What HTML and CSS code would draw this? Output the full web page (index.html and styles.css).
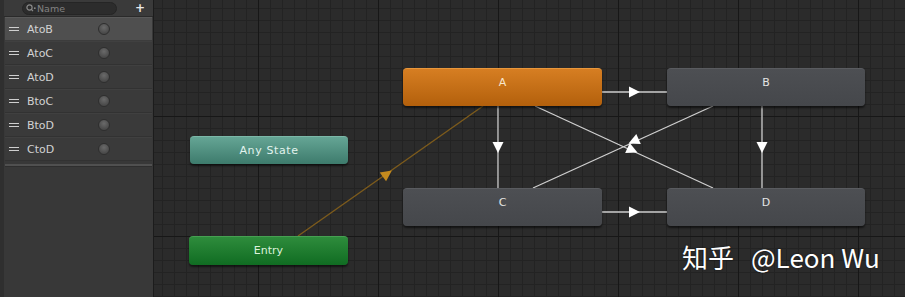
FILE: index.html
```html
<!DOCTYPE html>
<html>
<head>
<meta charset="utf-8">
<link rel="stylesheet" href="styles.css">
</head>
<body>
<div class="app">
  <aside class="panel">
    <div class="toolbar">
      <div class="search">
        <svg class="mag" width="10" height="9" viewBox="0 0 10 9"><circle cx="3.5" cy="3.5" r="2.6" fill="none" stroke="#8a8a8a" stroke-width="1.2"/><line x1="5.4" y1="5.4" x2="7" y2="7.2" stroke="#8a8a8a" stroke-width="1.2"/><circle cx="8.8" cy="4.2" r="0.9" fill="#8a8a8a"/></svg>
        <span class="placeholder">Name</span>
      </div>
      <span class="plus">+</span>
    </div>
    <ul class="list">
      <li class="row selected"><span class="grip"></span><span class="name">AtoB</span><span class="dot"></span></li>
      <li class="row"><span class="grip"></span><span class="name">AtoC</span><span class="dot"></span></li>
      <li class="row"><span class="grip"></span><span class="name">AtoD</span><span class="dot"></span></li>
      <li class="row"><span class="grip"></span><span class="name">BtoC</span><span class="dot"></span></li>
      <li class="row"><span class="grip"></span><span class="name">BtoD</span><span class="dot"></span></li>
      <li class="row"><span class="grip"></span><span class="name">CtoD</span><span class="dot"></span></li>
    </ul>
    <div class="sep"></div>
  </aside>
  <main class="canvas">
    <svg class="links" width="751" height="297" viewBox="154 0 751 297">
      <g stroke="#cfcfcf" stroke-width="1.3" fill="none">
        <line x1="602" y1="92" x2="667" y2="92"/>
        <line x1="602" y1="212" x2="667" y2="212"/>
        <line x1="498" y1="106" x2="498" y2="188"/>
        <line x1="762" y1="106" x2="762" y2="188"/>
        <line x1="535" y1="106" x2="713" y2="188"/>
        <line x1="533" y1="188" x2="713" y2="106"/>
      </g>
      <line x1="298" y1="236" x2="483" y2="106" stroke="#7d5b1c" stroke-width="1.4"/>
      <g fill="#ffffff">
        <polygon points="-5,-5.5 -5,5.5 6,0" transform="translate(634,92)"/>
        <polygon points="-5,-5.5 -5,5.5 6,0" transform="translate(634,212)"/>
        <polygon points="-5,-5.5 -5,5.5 6,0" transform="translate(498,147) rotate(90)"/>
        <polygon points="-5,-5.5 -5,5.5 6,0" transform="translate(762,147) rotate(90)"/>
        <polygon points="-5,-5.5 -5,5.5 6,0" transform="translate(634,141) rotate(155.8)"/>
        <polygon points="-5,-5.5 -5,5.5 6,0" transform="translate(632,150) rotate(24.7)"/>
      </g>
      <polygon points="-5,-5.5 -5,5.5 6,0" fill="#c48a1e" transform="translate(387,174) rotate(-35.1)"/>
    </svg>
    <div class="node any">Any State</div>
    <div class="node entry">Entry</div>
    <div class="node state orange n-a">A</div>
    <div class="node state gray n-b">B</div>
    <div class="node state gray n-c">C</div>
    <div class="node state gray n-d">D</div>
    <div class="watermark">知乎<span class="at">@Leon Wu</span></div>
  </main>
</div>
</body>
</html>
```
FILE: styles.css
```css
* { box-sizing: border-box; }
html, body { margin: 0; padding: 0; }
body {
  width: 905px;
  height: 297px;
  overflow: hidden;
  background: #2a2a2a;
  font-family: "DejaVu Sans", "Liberation Sans", sans-serif;
}
.app {
  display: flex;
  width: 905px;
  height: 297px;
}
.panel {
  width: 154px;
  flex: none;
  height: 297px;
  background: #383838;
  border-left: 4px solid #2f2f2f;
  border-right: 1px solid #1c1c1c;
  display: flex;
  flex-direction: column;
}
.toolbar {
  height: 17px;
  display: flex;
  align-items: center;
  padding-left: 18px;
  background: #3a3a3a;
  border-bottom: 1px solid #2a2a2a;
}
.search {
  width: 95px;
  height: 13px;
  border-radius: 7px;
  background: #2c2c2c;
  border: 1px solid #252525;
  display: flex;
  align-items: center;
  padding-left: 3px;
  gap: 1px;
}
.mag { flex: none; }
.placeholder {
  font-size: 9.5px;
  color: #828282;
  line-height: 11px;
}
.plus {
  margin-left: 18px;
  color: #e8e8e8;
  font-weight: bold;
  font-size: 12px;
  line-height: 12px;
}
.list {
  list-style: none;
  margin: 0;
  padding: 0 1px 0 1px;
}
.row {
  height: 24px;
  display: flex;
  align-items: center;
  background: #3a3a3a;
  border-bottom: 1px solid #323232;
  border-top: 1px solid #404040;
}
.row.selected {
  background: #4f4f4f;
  border-top-color: #5a5a5a;
  border-bottom-color: #3c3c3c;
}
.grip {
  width: 10px;
  height: 4px;
  margin-left: 4px;
  border-top: 1px solid #cfcfcf;
  border-bottom: 1px solid #cfcfcf;
}
.name {
  margin-left: 8px;
  width: 71px;
  font-size: 11px;
  color: #d2d2d2;
}
.dot {
  width: 12px;
  height: 12px;
  border-radius: 50%;
  background: radial-gradient(circle at 50% 35%, #6a6a6a, #4a4a4a 70%);
  border: 1px solid #2e2e2e;
}
.sep {
  margin: 3px 1px 0 1px;
  height: 3px;
  background: #505050;
  border-bottom: 1px solid #2e2e2e;
}
.canvas {
  position: relative;
  flex: 1;
  height: 297px;
  background-color: #2b2b2b;
  background-image:
    linear-gradient(to right, #171717 1px, transparent 1px),
    linear-gradient(to bottom, #171717 1px, transparent 1px),
    linear-gradient(to right, #232323 1px, transparent 1px),
    linear-gradient(to bottom, #232323 1px, transparent 1px);
  background-size: 120px 120px, 120px 120px, 12px 12px, 12px 12px;
  background-position: 104px 0, 0 116px, 8px 0, 0 8px;
}
.links {
  position: absolute;
  left: 0;
  top: 0;
}
.node {
  position: absolute;
  border-radius: 4px;
  font-size: 11px;
  text-align: center;
  box-shadow: 0 2px 2px rgba(0,0,0,0.55);
}
.any {
  left: 36px;
  top: 136px;
  width: 158px;
  height: 28px;
  line-height: 28px;
  color: #e2f3ee;
  letter-spacing: 0.6px;
  background: linear-gradient(#65a595, #3d7b6c);
  border-top: 1px solid #7cb8a8;
}
.entry {
  left: 35px;
  top: 236px;
  width: 159px;
  height: 29px;
  line-height: 27px;
  color: #dcf2dc;
  background: linear-gradient(#2e8c3c, #106c22);
  border-top: 1px solid #46a052;
}
.state {
  width: 199px;
  height: 38px;
  line-height: 12px;
  padding-top: 8px;
}
.orange {
  color: #f8e6cc;
  background: linear-gradient(#d67e22, #b3600c);
  border-top: 1px solid #e8973c;
}
.gray {
  color: #e4e4e4;
  background: linear-gradient(#4d4f53, #45474b);
  border-top: 1px solid #5a5c60;
}
.n-a { left: 249px; top: 68px; }
.n-b { left: 513px; top: 68px; width: 198px; }
.n-c { left: 249px; top: 188px; }
.n-d { left: 513px; top: 188px; width: 198px; }
.watermark {
  position: absolute;
  left: 528px;
  top: 239px;
  font-family: "Noto Sans CJK SC", sans-serif;
  font-size: 26px;
  line-height: 36px;
  color: #ffffff;
  white-space: nowrap;
  text-shadow: 0 0 2px rgba(0,0,0,0.6);
}
.watermark .at {
  margin-left: 17px;
}
```
